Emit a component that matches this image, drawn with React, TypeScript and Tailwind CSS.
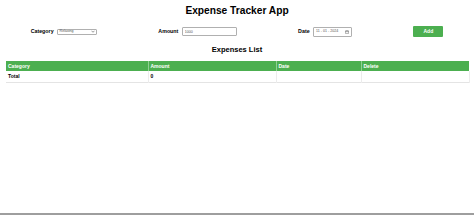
import React from 'react'

const fields = 'flex items-center gap-[3.5px] shrink-0'

export default function App() {
  return (
    <div className="w-full h-[215px] flex flex-col bg-white text-black font-['Liberation_Sans',Arial,sans-serif]">
      {/* Title */}
      <h1 className="pt-[5px] text-center text-[10.2px] leading-[12px] font-bold">Expense Tracker App</h1>

      {/* Form row */}
      <div className="mt-[9px] h-[11px] flex items-center justify-around">
        <div className={fields}>
          <span className="text-[5.3px] font-bold">Category</span>
          <div className="w-[40px] h-[6px] border-[0.5px] border-[#b0b0b0] rounded-[1px] flex items-center justify-between px-[1.5px]">
            <span className="text-[3.6px] leading-none text-[#555]">Relaxing</span>
            <svg width="4" height="3" viewBox="0 0 8 6">
              <path d="M1 1.5 L4 4.5 L7 1.5" fill="none" stroke="#555" strokeWidth="1.2" />
            </svg>
          </div>
        </div>

        <div className={fields}>
          <span className="text-[5.3px] font-bold">Amount</span>
          <input
            readOnly
            value="1000"
            className="shrink-0 w-[55px] min-w-[55px] h-[8.5px] border-[0.5px] border-[#b0b0b0] rounded-[1px] px-[2px] text-[3.6px] leading-none text-[#555] outline-none"
          />
        </div>

        <div className={fields}>
          <span className="text-[5.3px] font-bold">Date</span>
          <div className="w-[39px] h-[10px] border-[0.5px] border-[#b0b0b0] rounded-[1px] flex items-center justify-between px-[2px]">
            <span className="text-[3.6px] leading-none text-[#555]">11 - 01 - 2024</span>
            <svg width="4" height="4" viewBox="0 0 10 10">
              <rect x="1" y="2" width="8" height="7" rx="1" fill="none" stroke="#444" strokeWidth="1" />
              <path d="M1 4.2 H9 M3 1 V3 M7 1 V3" stroke="#444" strokeWidth="1" />
            </svg>
          </div>
        </div>

        <button className="w-[30px] h-[10.5px] bg-[#4caf50] rounded-[1px] text-white text-[5px] font-bold leading-none">
          Add
        </button>
      </div>

      {/* List */}
      <h2 className="mt-[8px] text-center text-[7.5px] leading-[10px] font-bold">Expenses List</h2>

      <table className="mt-[6px] ml-[6px] w-[463px] table-fixed border-collapse text-[5px] leading-none">
        <colgroup>
          <col className="w-[142px]" />
          <col className="w-[128px]" />
          <col className="w-[85px]" />
          <col className="w-[108px]" />
        </colgroup>
        <thead>
          <tr className="h-[10px] bg-[#4caf50] text-white">
            <th className="text-left font-bold px-[2px] border-r-[0.5px] border-[#8fd092]">Category</th>
            <th className="text-left font-bold px-[2px] border-r-[0.5px] border-[#8fd092]">Amount</th>
            <th className="text-left font-bold px-[2px] border-r-[0.5px] border-[#8fd092]">Date</th>
            <th className="text-left font-bold px-[2px]">Delete</th>
          </tr>
        </thead>
        <tbody>
          <tr className="h-[11px] border-b-[0.5px] border-[#e4e4e4]">
            <td className="px-[2px] font-bold border-r-[0.5px] border-[#ececec]">Total</td>
            <td className="px-[2px] font-bold border-r-[0.5px] border-[#ececec]">0</td>
            <td className="px-[2px] border-r-[0.5px] border-[#ececec]"></td>
            <td className="px-[2px] border-r-[0.5px] border-[#ececec]"></td>
          </tr>
        </tbody>
      </table>

      <div className="mt-auto h-[2px] bg-[#9e9e9e]" />
    </div>
  )
}
